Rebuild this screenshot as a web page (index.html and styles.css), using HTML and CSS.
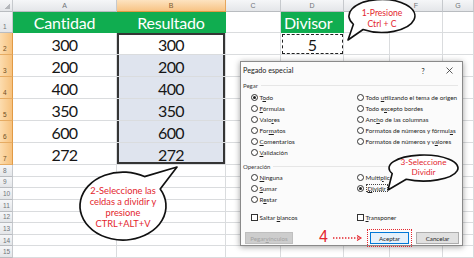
FILE: index.html
```html
<!DOCTYPE html>
<html lang="es">
<head>
<meta charset="utf-8">
<title>Pegado especial - Dividir</title>
<link rel="stylesheet" href="styles.css">
</head>
<body>
<div class="sheet">
  <div class="h corner"></div><div class="h ch">A</div><div class="h ch sel">B</div><div class="h ch">C</div><div class="h ch">D</div><div class="h ch">E</div><div class="h ch">F</div><div class="h ch">G</div>

  <div class="h rh">1</div><div class="c green">Cantidad</div><div class="c green">Resultado</div><div class="c"></div><div class="c green left">Divisor</div><div class="c"></div><div class="c"></div><div class="c"></div>

  <div class="h rh sel">2</div><div class="c num">300</div><div class="c num btop">300</div><div class="c"></div><div class="c num ants">5</div><div class="c"></div><div class="c"></div><div class="c"></div>

  <div class="h rh sel">3</div><div class="c num">200</div><div class="c num bmid">200</div><div class="c"></div><div class="c"></div><div class="c"></div><div class="c"></div><div class="c"></div>

  <div class="h rh sel">4</div><div class="c num">400</div><div class="c num bmid">400</div><div class="c"></div><div class="c"></div><div class="c"></div><div class="c"></div><div class="c"></div>

  <div class="h rh sel">5</div><div class="c num">350</div><div class="c num bmid">350</div><div class="c"></div><div class="c"></div><div class="c"></div><div class="c"></div><div class="c"></div>

  <div class="h rh sel">6</div><div class="c num">600</div><div class="c num bmid">600</div><div class="c"></div><div class="c"></div><div class="c"></div><div class="c"></div><div class="c"></div>

  <div class="h rh sel">7</div><div class="c num">272</div><div class="c num bbot">272</div><div class="c"></div><div class="c"></div><div class="c"></div><div class="c"></div><div class="c"></div>

  <div class="h rh sm">8</div><div class="c"></div><div class="c"></div><div class="c"></div><div class="c"></div><div class="c"></div><div class="c"></div><div class="c"></div>
  <div class="h rh sm">9</div><div class="c"></div><div class="c"></div><div class="c"></div><div class="c"></div><div class="c"></div><div class="c"></div><div class="c"></div>
  <div class="h rh sm">10</div><div class="c"></div><div class="c"></div><div class="c"></div><div class="c"></div><div class="c"></div><div class="c"></div><div class="c"></div>
  <div class="h rh sm">11</div><div class="c"></div><div class="c"></div><div class="c"></div><div class="c"></div><div class="c"></div><div class="c"></div><div class="c"></div>
  <div class="h rh sm">12</div><div class="c"></div><div class="c"></div><div class="c"></div><div class="c"></div><div class="c"></div><div class="c"></div><div class="c"></div>
  <div class="h rh sm">13</div><div class="c"></div><div class="c"></div><div class="c"></div><div class="c"></div><div class="c"></div><div class="c"></div><div class="c"></div>
  <div class="h rh sm">14</div><div class="c"></div><div class="c"></div><div class="c"></div><div class="c"></div><div class="c"></div><div class="c"></div><div class="c"></div>
  <div class="h rh sm">15</div><div class="c"></div><div class="c"></div><div class="c"></div><div class="c"></div><div class="c"></div><div class="c"></div><div class="c"></div>
</div>

<div class="dialog">
  <div class="dtitle">
    <span class="ttext">Pegado especial</span>
    <span class="tq">?</span>
    <span class="tx"><svg width="7" height="7" viewBox="0 0 7 7"><path d="M0.5 0.5 L6.5 6.5 M6.5 0.5 L0.5 6.5" stroke="#333" stroke-width="0.8" fill="none"/></svg></span>
  </div>
  <div class="glabel g1">Pegar</div>
  <div class="opts">
    <div class="opt"><span class="radio on"></span><span class="lbl">T<u>o</u>do</span></div>
    <div class="opt"><span class="radio"></span><span class="lbl">Todo <u>u</u>tilizando el tema de origen</span></div>
    <div class="opt"><span class="radio"></span><span class="lbl"><u>F</u>órmulas</span></div>
    <div class="opt"><span class="radio"></span><span class="lbl">Todo e<u>x</u>cepto bordes</span></div>
    <div class="opt"><span class="radio"></span><span class="lbl">Valo<u>r</u>es</span></div>
    <div class="opt"><span class="radio"></span><span class="lbl">Anc<u>h</u>o de las columnas</span></div>
    <div class="opt"><span class="radio"></span><span class="lbl">For<u>m</u>atos</span></div>
    <div class="opt"><span class="radio"></span><span class="lbl">Formatos de números y fórmul<u>a</u>s</span></div>
    <div class="opt"><span class="radio"></span><span class="lbl"><u>C</u>omentarios</span></div>
    <div class="opt"><span class="radio"></span><span class="lbl">Formatos de números y v<u>a</u>lores</span></div>
    <div class="opt"><span class="radio"></span><span class="lbl"><u>V</u>alidación</span></div>
    <div class="opt"></div>
  </div>
  <div class="glabel g2">Operación</div>
  <div class="opts ops">
    <div class="opt"><span class="radio"></span><span class="lbl"><u>N</u>inguna</span></div>
    <div class="opt"><span class="radio"></span><span class="lbl">Multi<u>p</u>licar</span></div>
    <div class="opt"><span class="radio"></span><span class="lbl"><u>S</u>umar</span></div>
    <div class="opt"><span class="radio on"></span><span class="lbl focus"><u>D</u>ividir</span></div>
    <div class="opt"><span class="radio"></span><span class="lbl">R<u>e</u>star</span></div>
    <div class="opt"></div>
  </div>
  <div class="opts checks">
    <div class="opt"><span class="check"></span><span class="lbl">Saltar <u>b</u>lancos</span></div>
    <div class="opt"><span class="check"></span><span class="lbl"><u>T</u>ransponer</span></div>
  </div>
  <div class="btns">
    <div class="btn dis">Pegar <u>v</u>ínculos</div>
    <div class="btn ok">Aceptar</div>
    <div class="btn cancel">Cancelar</div>
  </div>
</div>

<div class="callout c1">
  <svg class="bubble" width="76" height="50" viewBox="0 0 76 50">
    <path d="M9.4 28.25 A33 16.5 0 1 1 19.1 33.5 L4 44 Z" fill="#fff" stroke="#111" stroke-width="1.6" stroke-linejoin="round"/>
  </svg>
  <div class="ctext t1">1-Presione<br>Ctrl + C</div>
</div>

<div class="callout c2">
  <svg class="bubble" width="106" height="80" viewBox="0 0 106 80">
    <path d="M84.2 25 A43 34 0 1 1 68.5 12.6 L101 3 Z" fill="#fff" stroke="#111" stroke-width="1.7" stroke-linejoin="round"/>
  </svg>
  <div class="ctext t2">2-Seleccione las<br>celdas a dividir y<br>presione<br>CTRL+ALT+V</div>
</div>

<div class="callout c3">
  <svg class="bubble" width="80" height="44" viewBox="0 0 80 44">
    <path d="M8.2 23.5 A34.5 13 0 1 1 22.25 29.3 L4 40 Z" fill="#fff" stroke="#111" stroke-width="1.6" stroke-linejoin="round"/>
  </svg>
  <div class="ctext t3">3-Seleccione<br>Dividir</div>
</div>

<div class="four">4</div>
<svg class="arrow" width="34" height="8" viewBox="0 0 34 8">
  <line x1="1" y1="4" x2="27" y2="4" stroke="#e3262e" stroke-width="1.3" stroke-dasharray="1.4 1.6"/>
  <path d="M25 1.5 L29 4 L25 6.5" fill="none" stroke="#e3262e" stroke-width="1.1"/>
</svg>
</body>
</html>
```

FILE: styles.css
```css
html, body {
  margin: 0;
  padding: 0;
}
body {
  width: 474px;
  height: 258px;
  overflow: hidden;
  position: relative;
  background: #fff;
  font-family: "Lato", "Liberation Sans", sans-serif;
}

/* ---------- spreadsheet ---------- */
.sheet {
  display: grid;
  grid-template-columns: 13px 104px 109px 55px 63px 46px 53px 31px;
  grid-template-rows: 12px 21px repeat(6, 22px) repeat(8, 11.625px);
}
.c {
  box-sizing: border-box;
  border-right: 1px solid #dadcde;
  border-bottom: 1px solid #dadcde;
  background: #fff;
}
.h {
  box-sizing: border-box;
  background: linear-gradient(#f5f6f8, #e4e6e9);
  border-right: 1px solid #c6c9cd;
  border-bottom: 1px solid #b9bcc0;
  font-family: "Liberation Sans", sans-serif;
  font-size: 7px;
  color: #6f7378;
  display: flex;
  align-items: center;
  justify-content: center;
}
.corner {
  background:
    linear-gradient(135deg, transparent 52%, #b4b7bb 52%) right 2px bottom 2px / 6px 6px no-repeat,
    linear-gradient(#f5f6f8, #e4e6e9);
}
.ch.sel {
  background: linear-gradient(#fde3c0, #f7c384);
  border-right-color: #e6a65c;
  border-bottom-color: #e19a45;
  color: #7a5a33;
}
.rh {
  justify-content: flex-start;
  align-items: flex-end;
  padding-left: 3px;
  padding-bottom: 2px;
  font-size: 6.5px;
}
.rh.sm {
  align-items: center;
  padding-bottom: 0;
}
.rh.sel {
  background: linear-gradient(90deg, #fcdcae, #f7c27e);
  border-right-color: #e19a45;
  border-bottom-color: #e6ab62;
  color: #6e4d22;
}
.green {
  background: #10ad50;
  border-color: #10ad50;
  color: #fff;
  font-size: 16px;
  letter-spacing: -0.2px;
  display: flex;
  align-items: center;
  justify-content: center;
  padding-top: 1px;
}
.green.left {
  justify-content: flex-start;
  padding-left: 3px;
}
.num {
  font-size: 16px;
  letter-spacing: -0.6px;
  color: #161616;
  display: flex;
  align-items: center;
  justify-content: center;
  padding-top: 2px;
}
.btop {
  box-shadow: inset 2px 0 #353535, inset -2px 0 #353535, inset 0 2px #353535;
}
.bmid {
  background: #dfe4ee;
  box-shadow: inset 2px 0 #353535, inset -2px 0 #353535;
}
.bbot {
  background: #dfe4ee;
  box-shadow: inset 2px 0 #353535, inset -2px 0 #353535, inset 0 -2px #353535;
}
.ants {
  outline: 1.4px dashed #222;
  outline-offset: -2px;
}

/* ---------- dialog ---------- */
.dialog {
  position: absolute;
  left: 240px;
  top: 61px;
  width: 223px;
  height: 185px;
  box-sizing: border-box;
  border: 1px solid #8a8a8a;
  background: #fbfbfb;
  box-shadow: 0 1px 6px rgba(0, 0, 0, 0.38);
  font-family: "Lato", "Liberation Sans", sans-serif;
  font-size: 6.3px;
  color: #1e1e1e;
  display: flex;
  flex-direction: column;
}
.dtitle {
  height: 17px;
  display: flex;
  align-items: center;
  padding-left: 2px;
  font-size: 7.2px;
  color: #222;
}
.ttext {
  flex: 1;
}
.tq {
  width: 14px;
  text-align: center;
  font-size: 7px;
}
.tx {
  width: 14px;
  margin-left: 12px;
  margin-right: 6px;
  display: flex;
  justify-content: center;
}
.glabel {
  height: 10px;
  display: flex;
  align-items: center;
  gap: 3px;
  padding-left: 2px;
  padding-right: 4px;
  font-size: 6px;
  color: #3a3a3a;
}
.glabel::after {
  content: "";
  flex: 1;
  height: 1px;
  background: #e6e6e6;
}
.g1 {
  margin-top: 1px;
}
.g2 {
  margin-top: 3.5px;
}
.opts {
  display: grid;
  grid-template-columns: 106px 1fr;
  grid-auto-rows: 11px;
  padding-left: 10px;
  margin-top: 1.5px;
}
.ops {
  margin-top: 0.5px;
}
.checks {
  margin-top: 7px;
}
.opt {
  display: flex;
  align-items: center;
  white-space: nowrap;
}
.lbl {
  white-space: pre;
}
.radio {
  width: 7px;
  height: 7px;
  box-sizing: border-box;
  border: 1px solid #333;
  border-radius: 50%;
  background: #fff;
  margin-right: 1.5px;
  flex: none;
  display: flex;
  align-items: center;
  justify-content: center;
}
.radio.on::after {
  content: "";
  width: 3px;
  height: 3px;
  border-radius: 50%;
  background: #1e1e1e;
}
.check {
  width: 7px;
  height: 7px;
  box-sizing: border-box;
  border: 1px solid #333;
  background: #fff;
  margin-right: 1.5px;
  flex: none;
}
.focus {
  box-sizing: border-box;
  height: 8px;
  display: flex;
  align-items: center;
  border: 1px dotted #444;
  padding: 0 1px;
}
.btns {
  display: flex;
  height: 12px;
  margin-top: 9.5px;
  padding-left: 4px;
  padding-right: 3px;
}
.btn {
  box-sizing: border-box;
  height: 12px;
  border: 1px solid #adadad;
  background: #e1e1e1;
  display: flex;
  align-items: center;
  justify-content: center;
  font-size: 6.2px;
  color: #1e1e1e;
  white-space: nowrap;
}
.btn.dis {
  width: 48px;
  background: #cdcdcd;
  border-color: #bfbfbf;
  color: #a3a3a3;
}
.btn.ok {
  width: 39px;
  margin-left: auto;
  border-color: #0078d7;
  background: #e5f1fb;
  outline: 1.5px dotted #e3262e;
  outline-offset: 2px;
}
.btn.cancel {
  width: 43px;
  margin-left: 7px;
}

/* ---------- annotations ---------- */
.callout {
  position: absolute;
}
.bubble {
  display: block;
}
.ctext {
  position: absolute;
  left: 0;
  text-align: center;
  color: #e3262e;
  font-family: "Lato", "Liberation Sans", sans-serif;
  white-space: nowrap;
}
.c1 {
  left: 344px;
  top: -4px;
  width: 76px;
  height: 50px;
}
.t1 {
  top: 11.5px;
  width: 76px;
  font-size: 8.6px;
  line-height: 11px;
}
.c2 {
  left: 76px;
  top: 164px;
  width: 106px;
  height: 80px;
}
.t2 {
  top: 20.5px;
  width: 94px;
  font-size: 9.3px;
  line-height: 11px;
}
.c3 {
  left: 384px;
  top: 150px;
  width: 80px;
  height: 44px;
}
.t3 {
  top: 7px;
  width: 79px;
  font-size: 8.2px;
  line-height: 10px;
}
.four {
  position: absolute;
  left: 319px;
  top: 229px;
  font-family: "Liberation Sans", sans-serif;
  font-size: 16px;
  line-height: 16px;
  color: #e3262e;
}
.arrow {
  position: absolute;
  left: 332px;
  top: 234px;
}
```
